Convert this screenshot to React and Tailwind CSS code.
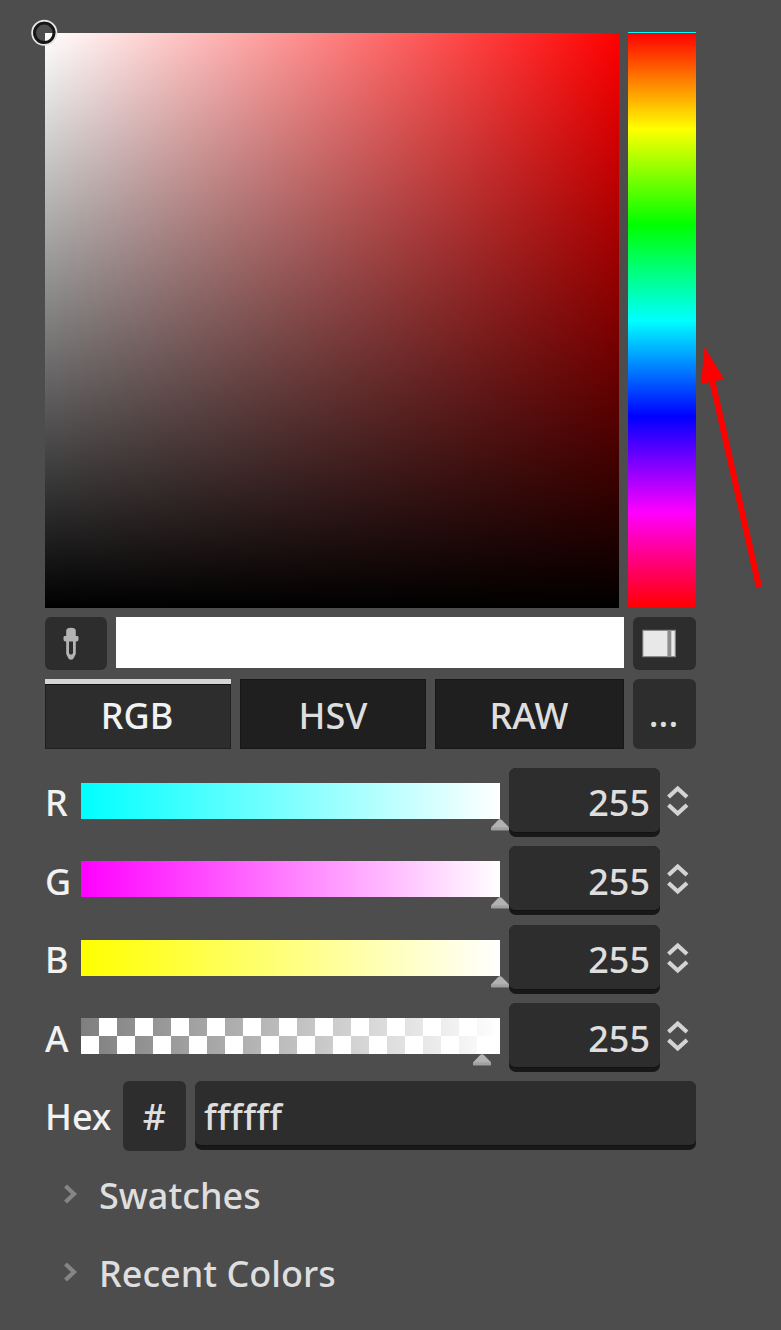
const channels = [
  { label: 'R', value: 255, row: 'h-[78px]', line: 'leading-[70px]', bar: 'bg-[linear-gradient(to_right,#00ffff,#ffffff)]', handle: 'left-[410px]' },
  { label: 'G', value: 255, row: 'h-[79px]', line: 'leading-[72px]', bar: 'bg-[linear-gradient(to_right,#ff00ff,#ffffff)]', handle: 'left-[410px]' },
  { label: 'B', value: 255, row: 'h-[78px]', line: 'leading-[70px]', bar: 'bg-[linear-gradient(to_right,#ffff00,#ffffff)]', handle: 'left-[410px]' },
  { label: 'A', value: 255, row: 'h-[78px]', line: 'leading-[72px]', alpha: true, handle: 'left-[392px]' },
];

function PickerHandle() {
  return (
    <svg className="absolute -left-[15px] -top-[14px]" width="28" height="28" viewBox="0 0 28 28" fill="none">
      <circle cx="14.3" cy="13.8" r="12.1" stroke="#e4e4e4" strokeWidth="1.9" />
      <circle cx="14.3" cy="13.8" r="9.7" stroke="#161616" strokeWidth="2.9" />
    </svg>
  );
}

function Dropper() {
  return (
    <svg className="ml-[18px] mt-[10px]" width="16" height="34" viewBox="0 0 16 34">
      <path d="M3.2 9V4Q3.2 .8 8 .8Q12.8 .8 12.8 4V9H14.5Q15.5 9 15.5 10.5V12.5Q15.5 14.4 13.5 14.4H12.8V27L10.8 31Q10.3 32.7 8 32.7Q5.7 32.7 5.2 31L3.2 27V14.4H2.5Q.5 14.4 .5 12.5V10.5Q.5 9 1.5 9Z" fill="#b3b3b3" />
      <path d="M6 14.4H10V26L9 27.6H7L6 26Z" fill="#2d2d2d" />
    </svg>
  );
}

function ShapeIcon() {
  return (
    <svg className="ml-[9px] mt-[12px]" width="35" height="29" viewBox="0 0 35 29">
      <rect x=".3" y=".8" width="33.6" height="27.4" fill="#8c8c8c" />
      <rect x="1.4" y="2" width="24" height="25" fill="#e8e8e8" />
      <rect x="29.3" y="2" width="3.4" height="25" fill="#e8e8e8" />
    </svg>
  );
}

function Field({ className, children }) {
  return (
    <div className={`h-[69px] overflow-hidden rounded-[7px] bg-[#181818] ${className}`}>
      <div className="h-[65px] rounded-b-[6px] border-b border-[#121212] bg-[#2d2d2d] text-[#dedede]">{children}</div>
    </div>
  );
}

function Tab({ className, children }) {
  return (
    <div className={`h-[70px] border text-center leading-[71px] ${className}`}>
      {children}
    </div>
  );
}

function AlphaBar() {
  return (
    <div className="h-9 w-[419px] overflow-hidden bg-white bg-[conic-gradient(#ffffff_25%,#7f7f7f_0_50%,#ffffff_0_75%,#7f7f7f_0)] bg-[size:36px_36px] bg-[position:0_0]">
      <div className="h-full bg-[linear-gradient(to_right,rgba(255,255,255,0),#ffffff)]" />
    </div>
  );
}

function Channel({ label, value, row, line, bar, alpha, handle }) {
  return (
    <div className={`flex ${row} ${line}`}>
      <div className="w-9">{label}</div>
      <div className="relative w-[428px] pt-[15px]">
        {alpha ? <AlphaBar /> : <div className={`h-9 w-[419px] ${bar}`} />}
        <svg className={`absolute top-[51px] ${handle}`} width="19" height="12" viewBox="0 0 19 12">
          <path d="M.2 8.2L6.7 1.4Q9 -.7 11.4 1.4L18 8.2V11.2H.2Z" fill="#b2b2b2" />
          <path d="M.2 8.4V11.2H18V8.4Z" fill="#a0a0a0" />
        </svg>
      </div>
      <Field className="w-[151px] text-right"><span className="pr-[10px]">{value}</span></Field>
      <svg className="ml-[7px] mt-[17px]" width="22" height="32" viewBox="0 0 22 32" fill="none" stroke="#d4d4d4" strokeWidth="4.2">
        <path d="M1.5 12L10.7 3.5L20 12M1.5 20L10.7 28.5L20 20" />
      </svg>
    </div>
  );
}

function Section({ title, className }) {
  return (
    <div className={`flex text-[#dedede] ${className}`}>
      <svg className="ml-[18px] mt-[24px]" width="16" height="20" viewBox="0 0 16 20" fill="none" stroke="#858585" strokeWidth="4.2">
        <path d="M2.5 2L11 10L2.5 18" />
      </svg>
      <div className="ml-5 leading-[72px]">{title}</div>
    </div>
  );
}

export default function App() {
  return (
    <main className="relative h-[1330px] w-[781px] overflow-hidden bg-[#4d4d4d] pl-[45px] pt-[33px] font-['Noto_Sans',sans-serif] text-[36px] font-medium text-[#f2f2f2]">
      <div className="w-[651px]">
        <div className="flex h-[575px] gap-[9px]">
          <div className="relative w-[574px] bg-[linear-gradient(to_right,#ffffff,#ff0000)]">
            <div className="h-full bg-[linear-gradient(to_bottom,rgba(0,0,0,0),#000000)]" />
            <PickerHandle />
          </div>
          <div className="relative w-[68px] bg-[linear-gradient(#ff0000,#ffff00,#00ff00,#00ffff,#0000ff,#ff00ff,#ff0000)]">
            <div className="absolute -top-px h-px w-full bg-[#00ffff]" />
          </div>
        </div>
        <div className="mt-[9px] flex h-[53px] gap-[9px]">
          <div className="w-[62px] rounded-[6px] bg-[#2d2d2d]"><Dropper /></div>
          <div className="h-[51px] w-[508px] bg-white" />
          <div className="w-[63px] rounded-[6px] bg-[#2d2d2d]"><ShapeIcon /></div>
        </div>
        <div className="mt-[9px] flex gap-[9px]">
          <div className="h-[70px] w-[186px] border border-t-0 border-[#202020] bg-[#2d2d2d] text-center">
            <div className="-mx-px h-[6px] border-b border-[#111111] bg-[#d5d5d5]" />
            <div className="pr-[2px] leading-[61px]">RGB</div>
          </div>
          <Tab className="w-[186px] border-[#171717] bg-[#1f1f1f] text-[#dedede]">HSV</Tab>
          <Tab className="w-[189px] border-[#171717] bg-[#1f1f1f] pr-px text-[#dedede]">RAW</Tab>
          <div className="h-[70px] w-[63px] rounded-[6px] bg-[#2d2d2d] pr-[2px] text-center leading-[70px] text-[#dedede]">...</div>
        </div>
        <div className="mt-[19px]">
          {channels.map((c) => <Channel key={c.label} {...c} />)}
        </div>
        <div className="flex h-[79px] leading-[72px]">
          <div className="w-[78px]">Hex</div>
          <div className="mr-[9px] h-[70px] w-[63px] rounded-[6px] bg-[#2d2d2d] text-center text-[#dedede]">#</div>
          <Field className="w-[501px]"><span className="pl-[9px] tracking-[0.2px]">ffffff</span></Field>
        </div>
        <Section title="Swatches" className="h-[78px]" />
        <Section title="Recent Colors" className="h-[78px]" />
      </div>
      <svg className="absolute left-[700px] top-[345px]" width="64" height="245" viewBox="0 0 64 245">
        <path d="M12 35L59 242" stroke="#ff0000" strokeWidth="6" />
        <path d="M4.5 2L24 34L1 39Z" fill="#ff0000" />
      </svg>
    </main>
  );
}
